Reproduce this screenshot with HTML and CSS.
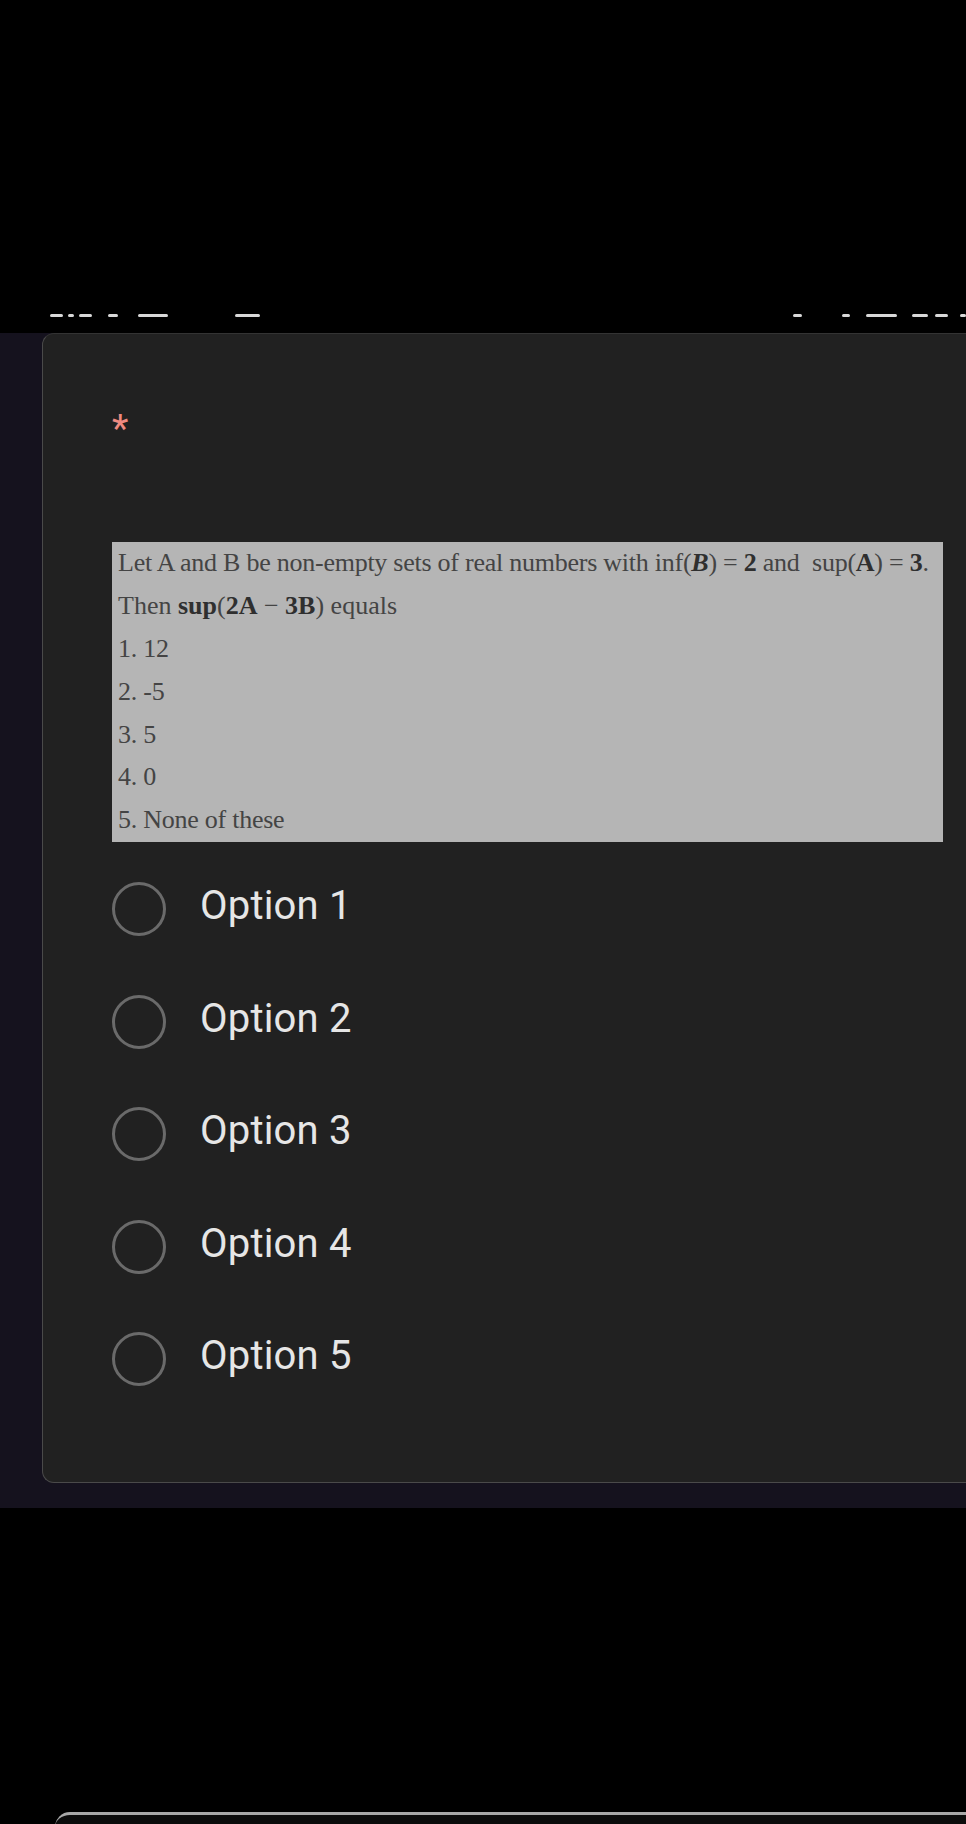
FILE: index.html
```html
<!DOCTYPE html>
<html lang="en">
<head>
<meta charset="utf-8">
<title>Question</title>
<link rel="stylesheet" href="styles.css">
</head>
<body>
<header class="status">
  <div class="status-left">
    <span class="mk w13"></span><span class="mk w6 g5"></span><span class="mk w13 g5"></span>
    <span class="mk w10 g16"></span><span class="mk w30 thick g20"></span>
    <span class="mk w25 thick g67"></span>
  </div>
  <div class="status-right">
    <span class="mk w9"></span><span class="mk w8 g40"></span><span class="mk w31 g16"></span>
    <span class="mk w16 thick g15"></span><span class="mk w13 thick g7"></span><span class="mk w6 g12"></span>
  </div>
</header>
<main class="stage">
  <section class="card">
    <div class="required">*</div>
    <div class="question">
      <p class="ql first">Let A and B be non-empty sets of real numbers with inf(<b><i>B</i></b>) = <b>2</b> and&nbsp; sup(<b>A</b>) = <b>3</b>.</p>
      <p class="ql second">Then <b>sup</b>(<b>2A</b> − <b>3B</b>) equals</p>
      <p class="ql">1. 12</p>
      <p class="ql">2. -5</p>
      <p class="ql">3. 5</p>
      <p class="ql">4. 0</p>
      <p class="ql">5. None of these</p>
    </div>
    <ul class="options">
      <li class="opt"><span class="radio"></span><span class="label">Option 1</span></li>
      <li class="opt"><span class="radio"></span><span class="label">Option 2</span></li>
      <li class="opt"><span class="radio"></span><span class="label">Option 3</span></li>
      <li class="opt"><span class="radio"></span><span class="label">Option 4</span></li>
      <li class="opt"><span class="radio"></span><span class="label">Option 5</span></li>
    </ul>
  </section>
</main>
<footer class="bottom">
  <div class="sheet"></div>
</footer>
</body>
</html>
```

FILE: styles.css
```css
html, body {
  margin: 0;
  padding: 0;
  background: #000;
}
body {
  width: 966px;
  height: 1824px;
  overflow: hidden;
  font-family: Roboto, "Noto Sans", sans-serif;
}

/* cropped status bar */
.status {
  height: 333px;
  box-sizing: border-box;
  display: flex;
  justify-content: space-between;
  align-items: flex-end;
  padding: 0 0 16px 50px;
}
.status-left, .status-right {
  display: flex;
  align-items: center;
}
.mk {
  display: block;
  height: 3px;
  background: #d8d8d8;
  border-radius: 2px;
  filter: blur(0.7px);
}
.mk.thick { height: 3.5px; }
.w6 { width: 6px; }
.w8 { width: 8px; }
.w9 { width: 9px; }
.w10 { width: 10px; }
.w13 { width: 13px; }
.w16 { width: 16px; }
.w25 { width: 25px; }
.w30 { width: 30px; }
.w31 { width: 31px; }
.g5 { margin-left: 5px; }
.g7 { margin-left: 7px; }
.g12 { margin-left: 12px; }
.g15 { margin-left: 15px; }
.g16 { margin-left: 16px; }
.g20 { margin-left: 20px; }
.g40 { margin-left: 40px; }
.g67 { margin-left: 67px; }

/* main area */
.stage {
  background: #15121e;
  height: 1175px;
  box-sizing: border-box;
  padding-left: 42px;
}
.card {
  height: 1150px;
  box-sizing: border-box;
  background: #212121;
  border: 1px solid #4a4a4a;
  border-right: none;
  border-top-color: #333;
  border-radius: 12px 0 0 12px;
  padding: 76px 0 0 69px;
}
.required {
  font-family: Roboto, sans-serif;
  font-size: 38px;
  line-height: 38px;
  height: 38px;
  color: #ef8a80;
}
.question {
  margin-top: 94px;
  width: 831px;
  background: #b5b5b5;
  padding: 0 0 0 6px;
  box-sizing: border-box;
}
.ql {
  margin: 0;
  font-family: "Liberation Serif", "Times New Roman", serif;
  font-size: 26px;
  line-height: 42.8px;
  color: #444;
  white-space: nowrap;
  letter-spacing: -0.25px;
}
.ql.first {
  line-height: 41px;
}
.ql.second {
  line-height: 45px;
  letter-spacing: 0;
}
.ql b {
  color: #2f2f2f;
}

.options {
  list-style: none;
  margin: 11px 0 0 0;
  padding: 0;
}
.opt {
  height: 112.5px;
  display: flex;
  align-items: center;
}
.radio {
  width: 54px;
  height: 54px;
  box-sizing: border-box;
  border: 3.5px solid #6a6a6a;
  border-radius: 50%;
  flex: none;
}
.label {
  margin-left: 34px;
  padding-bottom: 7px;
  font-size: 40px;
  color: #e6e6e6;
  letter-spacing: 0.2px;
}

/* bottom */
.bottom {
  height: 316px;
  box-sizing: border-box;
  padding-top: 304px;
  padding-left: 55px;
  background: #000;
}
.sheet {
  height: 12px;
  border-top: 3px solid #a8a8a8;
  border-top-left-radius: 40px;
  background: #0c0c0c;
}
```
